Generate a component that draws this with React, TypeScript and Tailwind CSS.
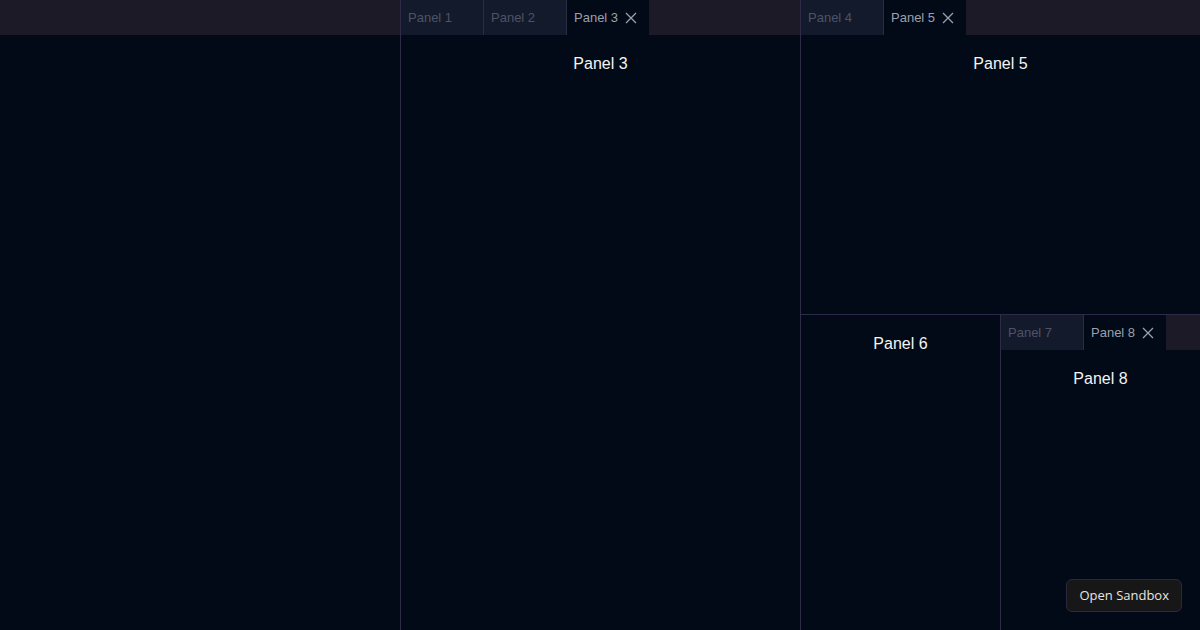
import React from 'react';

type Tab = { title: string; active?: boolean };

function CloseIcon() {
  return (
    <svg width="12" height="12" viewBox="0 0 12 12" className="shrink-0">
      <path d="M1 1L11 11M11 1L1 11" stroke="currentColor" strokeWidth="1.3" />
    </svg>
  );
}

function TabBar({ tabs }: { tabs: Tab[] }) {
  return (
    <div className="flex h-[35px] shrink-0 bg-[#1c1a27]">
      {tabs.map((t, i) => (
        <div
          key={t.title}
          className={
            'flex items-center justify-between pl-[7px] pr-3 text-[13px] ' +
            (i > 0 ? 'w-[83px] border-l border-[#2a2e44] ' : 'w-[82px] ') +
            (t.active ? 'bg-[#020a17] text-[#9ba0ac]' : 'bg-[#131a2c] text-[#4d5366]')
          }
        >
          <span>{t.title}</span>
          {t.active && <CloseIcon />}
        </div>
      ))}
    </div>
  );
}

function Content({ label }: { label?: string }) {
  return (
    <div className="flex-1 bg-[#020a17] pt-[17px] text-center text-base text-[#f3f4f6]">
      {label}
    </div>
  );
}

export default function App() {
  return (
    <div
      className="relative flex h-[630px] w-[1200px] overflow-hidden bg-[#020a17]"
      style={{ fontFamily: '"Liberation Sans", Arial, sans-serif' }}
    >
      {/* LEFT GROUP (empty) */}
      <div className="flex w-[400px] flex-col">
        <TabBar tabs={[]} />
        <Content />
      </div>

      {/* MIDDLE GROUP */}
      <div className="flex w-[400px] flex-col border-l border-[#2d2b47]">
        <TabBar
          tabs={[{ title: 'Panel 1' }, { title: 'Panel 2' }, { title: 'Panel 3', active: true }]}
        />
        <Content label="Panel 3" />
      </div>

      {/* RIGHT SPLIT */}
      <div className="flex w-[400px] flex-col border-l border-[#2d2b47]">
        <div className="flex h-[315px] shrink-0 flex-col border-b border-[#2d2b47]">
          <TabBar tabs={[{ title: 'Panel 4' }, { title: 'Panel 5', active: true }]} />
          <Content label="Panel 5" />
        </div>
        <div className="flex flex-1">
          <div className="flex w-[199px] flex-col">
            <Content label="Panel 6" />
          </div>
          <div className="flex flex-1 flex-col border-l border-[#2d2b47]">
            <TabBar tabs={[{ title: 'Panel 7' }, { title: 'Panel 8', active: true }]} />
            <Content label="Panel 8" />
          </div>
        </div>
      </div>

      <button
        className="absolute bottom-[18px] right-[18px] flex h-[33px] items-center rounded-md border border-[#2a2a3c] bg-[#171717] px-3 text-[13px] text-[#e5e5e5]"
        style={{ fontFamily: '"Open Sans", "Noto Sans", sans-serif' }}
      >
        Open Sandbox
      </button>
    </div>
  );
}
